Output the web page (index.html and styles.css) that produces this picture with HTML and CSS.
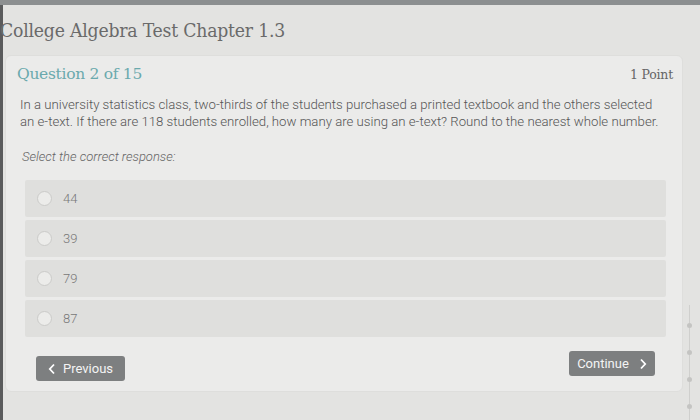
FILE: index.html
```html
<!DOCTYPE html>
<html>
<head>
<meta charset="utf-8">
<link rel="stylesheet" href="styles.css">
</head>
<body>
<div class="topbar"></div>
<div class="screen">
  <h1 class="title">College Algebra Test Chapter 1.3</h1>
  <div class="card">
    <div class="card-head">
      <span class="qnum">Question 2 of 15</span>
      <span class="points">1 Point</span>
    </div>
    <p class="question">In a university statistics class, two-thirds of the students purchased a printed textbook and the others selected an e-text. If there are 118 students enrolled, how many are using an e-text? Round to the nearest whole number.</p>
    <p class="prompt">Select the correct response:</p>
    <div class="options">
      <div class="option"><span class="radio"></span><span class="opt-text">44</span></div>
      <div class="option"><span class="radio"></span><span class="opt-text">39</span></div>
      <div class="option"><span class="radio"></span><span class="opt-text">79</span></div>
      <div class="option"><span class="radio"></span><span class="opt-text">87</span></div>
    </div>
    <div class="nav">
      <button class="btn prev"><svg class="chev" width="8" height="12" viewBox="0 0 8 12"><path d="M6 1.5 L1.8 6 L6 10.5" fill="none" stroke="#fff" stroke-width="1.8"/></svg>Previous</button>
      <button class="btn next">Continue<svg class="chev" width="8" height="12" viewBox="0 0 8 12"><path d="M2 1.5 L6.2 6 L2 10.5" fill="none" stroke="#fff" stroke-width="1.8"/></svg></button>
    </div>
  </div>
  <div class="rail">
    <span class="dot"></span><span class="dot"></span><span class="dot"></span><span class="dot"></span>
  </div>
</div>
</body>
</html>
```

FILE: styles.css
```css
html, body {
  margin: 0;
  padding: 0;
}
body {
  width: 700px;
  height: 420px;
  overflow: hidden;
  background: #e3e3e1;
  font-family: Roboto, "Liberation Sans", sans-serif;
}
.topbar {
  height: 5px;
  background: #8c8f90;
}
.screen {
  position: relative;
  height: 415px;
  border-left: 3px solid #5a5b5c;
  box-sizing: border-box;
}
.title {
  margin: 0;
  padding: 14px 0 0 0;
  margin-left: -3px;
  font-family: "DejaVu Serif", serif;
  font-stretch: condensed;
  font-weight: normal;
  font-size: 19.2px;
  line-height: 24px;
  color: #6a6a6a;
  letter-spacing: -0.2px;
}
.card {
  margin: 12px 0 0 2px;
  width: 678px;
  height: 337px;
  box-sizing: border-box;
  background: #ebebea;
  border: 1px solid #dededc;
  border-radius: 6px;
  padding: 9px 9px 0 11px;
}
.card-head {
  display: flex;
  justify-content: space-between;
  align-items: baseline;
}
.qnum {
  font-family: "DejaVu Serif", serif;
  font-size: 15.5px;
  color: #6aa9ad;
  letter-spacing: -0.3px;
}
.points {
  font-family: "DejaVu Serif", serif;
  font-size: 12.5px;
  color: #666;
  letter-spacing: -0.2px;
}
.question {
  margin: 14px 0 0 3px;
  font-size: 13.2px;
  line-height: 16.5px;
  color: #555;
  font-weight: 300;
  width: 642px;
}
.prompt {
  margin: 19px 0 0 5px;
  font-size: 13px;
  font-style: italic;
  font-weight: 300;
  color: #666;
}
.options {
  margin: 16px 7px 0 8px;
  display: flex;
  flex-direction: column;
  gap: 3px;
}
.option {
  height: 37px;
  background: #dfdfdd;
  border-radius: 2px;
  display: flex;
  align-items: center;
  padding-left: 12px;
}
.radio {
  width: 13px;
  height: 13px;
  border-radius: 50%;
  border: 1px solid #cbcbc9;
  background: #ececea;
}
.opt-text {
  margin-left: 11px;
  font-size: 13px;
  color: #777;
  font-weight: 300;
}
.nav {
  margin: 14px 18px 0 19px;
  display: flex;
  justify-content: space-between;
  align-items: flex-start;
}
.btn {
  display: flex;
  align-items: center;
  gap: 7px;
  height: 25px;
  border: none;
  border-radius: 3px;
  background: #7d7f80;
  color: #f4f4f4;
  font-family: Roboto, "Liberation Sans", sans-serif;
  font-size: 13px;
  padding: 0 12px;
}
.chev {
  flex: none;
}
.prev {
  width: 89px;
  margin-top: 5px;
}
.next {
  width: 86px;
  gap: 10px;
  padding: 0 8px;
  justify-content: center;
}
.rail {
  position: absolute;
  right: 10px;
  top: 300px;
  width: 1px;
  height: 120px;
  background: #cfcfcd;
  display: flex;
  flex-direction: column;
  align-items: center;
  gap: 22px;
  padding-top: 18px;
  box-sizing: border-box;
}
.dot {
  width: 5px;
  height: 5px;
  border-radius: 50%;
  background: #c4c4c2;
  flex: none;
}
```
